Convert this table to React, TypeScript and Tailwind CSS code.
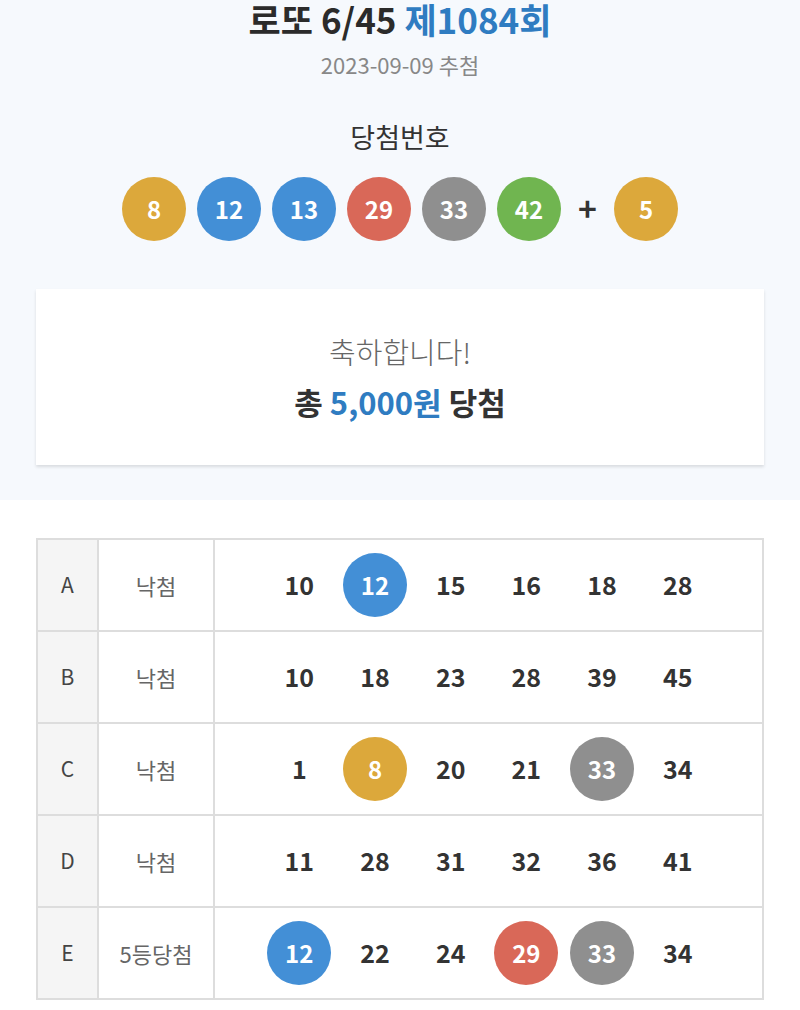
import React from 'react';

const FONT = { fontFamily: '"Noto Sans CJK KR", "Noto Sans", sans-serif' };

const ballColor = (n: number) => {
  if (n <= 10) return 'bg-[#dca83b]';
  if (n <= 20) return 'bg-[#438fd6]';
  if (n <= 30) return 'bg-[#d96858]';
  if (n <= 40) return 'bg-[#8f8f8f]';
  return 'bg-[#70b550]';
};

const winning = [8, 12, 13, 29, 33, 42];
const bonus = 5;

const games = [
  { label: 'A', result: '낙첨', nums: [10, 12, 15, 16, 18, 28] },
  { label: 'B', result: '낙첨', nums: [10, 18, 23, 28, 39, 45] },
  { label: 'C', result: '낙첨', nums: [1, 8, 20, 21, 33, 34] },
  { label: 'D', result: '낙첨', nums: [11, 28, 31, 32, 36, 41] },
  { label: 'E', result: '5등당첨', nums: [12, 22, 24, 29, 33, 34] },
];

const Ball = ({ n }: { n: number }) => (
  <div
    className={`w-16 h-16 rounded-full flex items-center justify-center text-white text-[24px] font-bold ${ballColor(n)}`}
  >
    {n}
  </div>
);

const App = () => {
  return (
    <div className="w-[800px] bg-white" style={FONT}>
      <div className="bg-[#f6f9fd] flex flex-col items-center pb-[35px]">
        <div className="text-[35px] leading-[38px] font-bold text-[#2b2b2b]">
          로또 6/45 <span className="text-[#2f7cc1]">제1084회</span>
        </div>
        <div className="mt-[12px] text-[22px] leading-[28px] text-[#888]">2023-09-09 추첨</div>
        <div className="mt-[41px] text-[27px] leading-[36px] text-[#333]">당첨번호</div>
        <div className="mt-[22px] flex items-center gap-[11px]">
          {winning.map((n) => (
            <Ball key={n} n={n} />
          ))}
          <div className="w-[31px] text-center text-[32px] font-bold text-[#333] leading-none pb-[4px]">+</div>
          <Ball n={bonus} />
        </div>
        <div className="mt-[48px] w-[728px] h-[176px] bg-white shadow-[0_2px_3px_rgba(0,0,0,0.12)] flex flex-col items-center justify-center">
          <div className="text-[29px] leading-[38px] font-light text-[#666]">축하합니다!</div>
          <div className="mt-[12px] text-[31px] leading-[40px] font-bold text-[#333]">
            총 <span className="text-[#2f7cc1]">5,000원</span> 당첨
          </div>
        </div>
      </div>

      <div className="pt-[38px] px-[36px] pb-[10px]">
        <div className="border-2 border-[#ddd]">
          {games.map((g, i) => (
            <div
              key={g.label}
              className={`flex ${i > 0 ? 'h-[92px] border-t-2 border-[#ddd]' : 'h-[90px]'}`}
            >
              <div className="w-[61px] bg-[#f5f5f5] border-r-2 border-[#ddd] flex items-center justify-center text-[21px] text-[#444]">
                {g.label}
              </div>
              <div className="w-[116px] border-r-2 border-[#ddd] flex items-center justify-center text-[22px] text-[#666]">
                {g.result}
              </div>
              <div className="flex-1 flex items-center justify-center gap-[11.7px]">
                {g.nums.map((n) =>
                  winning.includes(n) ? (
                    <Ball key={n} n={n} />
                  ) : (
                    <div
                      key={n}
                      className="w-16 h-16 flex items-center justify-center text-[25px] font-bold text-[#333]"
                    >
                      {n}
                    </div>
                  ),
                )}
              </div>
            </div>
          ))}
        </div>
      </div>
    </div>
  );
};

export default App;
